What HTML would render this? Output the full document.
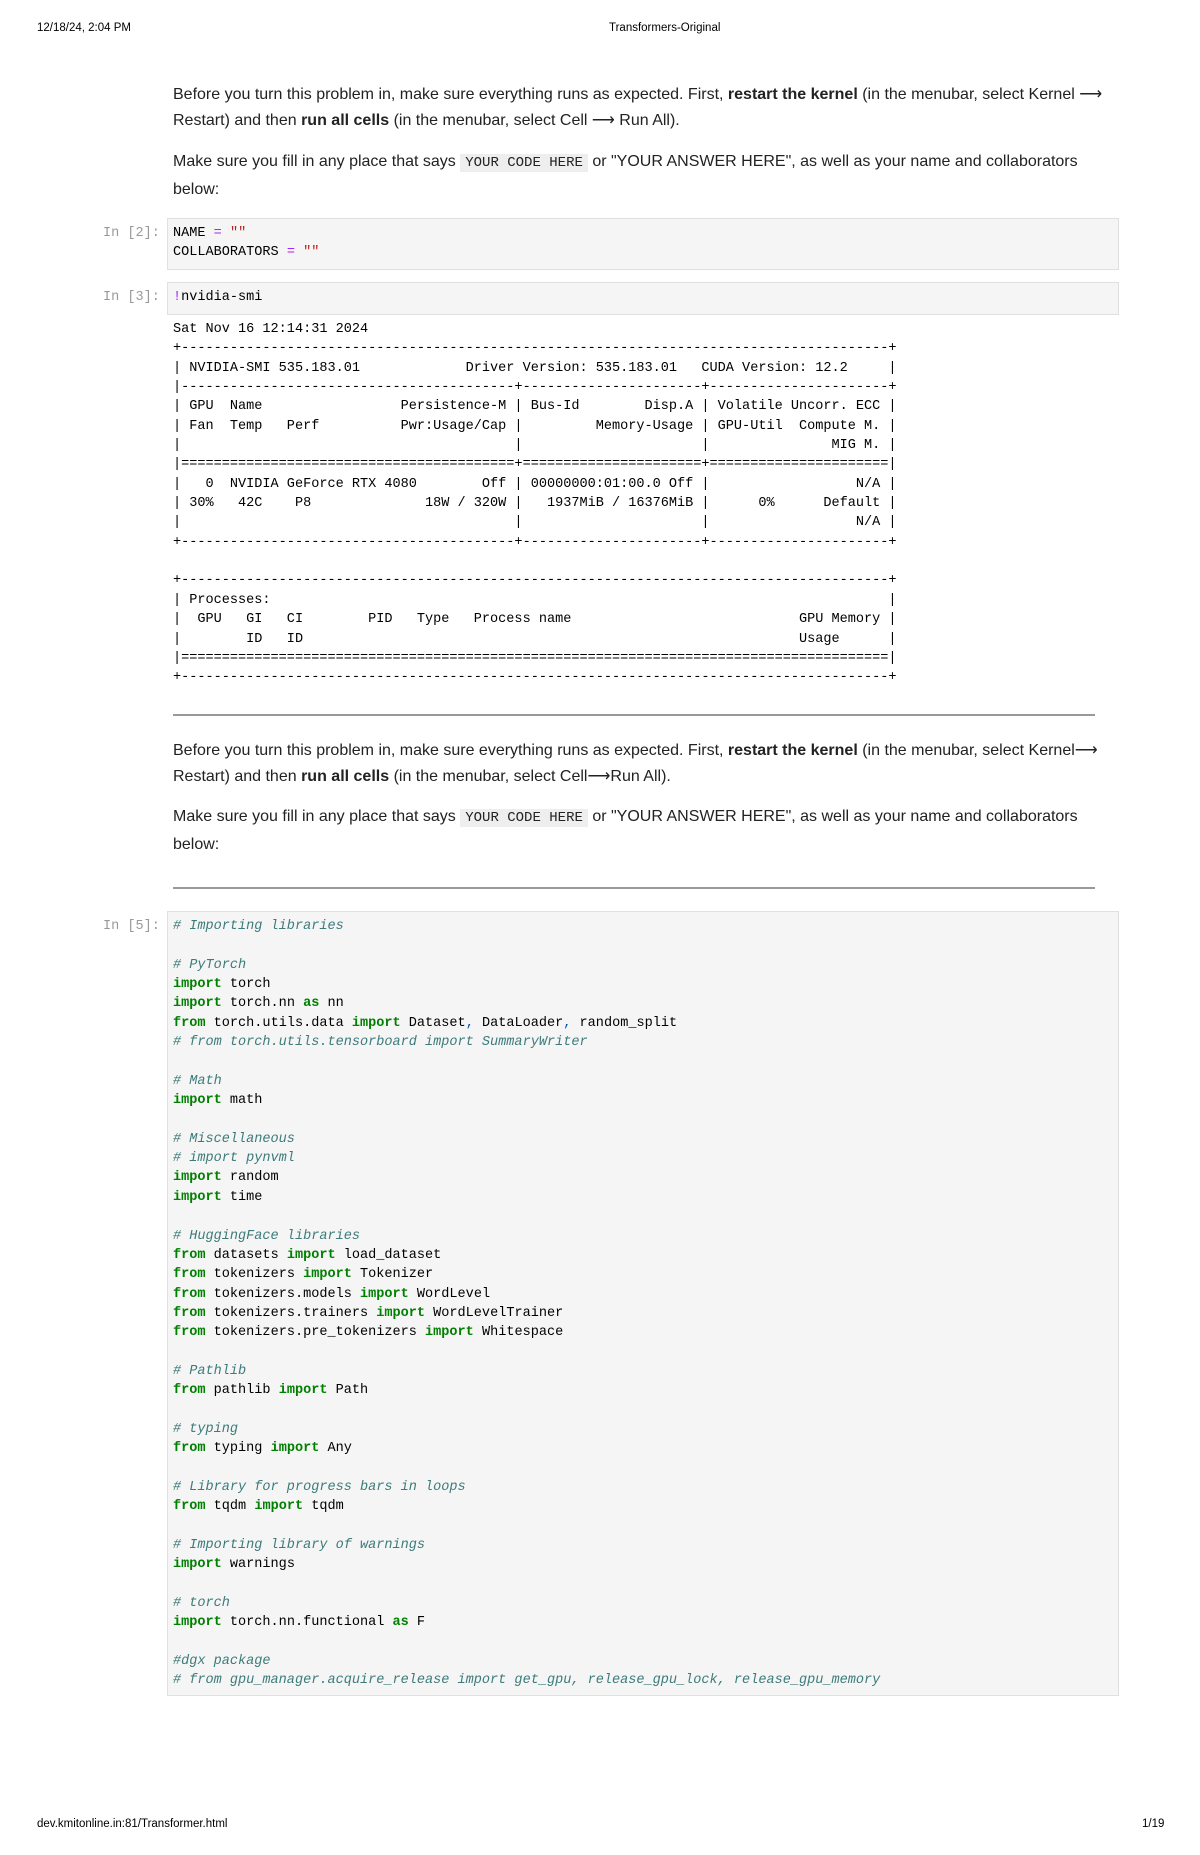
<!DOCTYPE html>
<html><head><meta charset="utf-8"><style>
*{margin:0;padding:0;box-sizing:border-box}
body{width:1200px;height:1855px;position:relative;background:#fff;font-family:"Liberation Sans",sans-serif;color:#000;overflow:hidden}
.hd{position:absolute;top:22px;font-size:11.5px;font-family:"Liberation Sans",sans-serif}
.p{position:absolute;left:173px;width:930px;font-size:16px;line-height:25.5px;color:#222}
.p code{font-family:"Liberation Mono",monospace;font-size:14px;background:#eee;padding:1px 5px}
.box{position:absolute;left:167px;width:952px;background:#f5f5f5;border:1px solid #e0e0e0}
pre{position:absolute;left:173px;font-family:"Liberation Mono",monospace;font-size:13.55px;line-height:19.35px;color:#000;white-space:pre}
.pr{position:absolute;left:103px;font-family:"Liberation Mono",monospace;font-size:13.55px;line-height:19.35px;color:#999}
.k{color:#008000;font-weight:bold}.c{color:#3d7b7b;font-style:italic}.o{color:#aa22ff}.s{color:#ba2121}.pu{color:#0055aa}
.hr{position:absolute;left:173px;width:922px;height:2px;background:#999}
</style></head><body>
<div class="hd" style="left:37px">12/18/24, 2:04 PM</div>
<div class="hd" style="left:609px">Transformers-Original</div>

<div class="p" style="top:82px">Before you turn this problem in, make sure everything runs as expected. First, <b>restart the kernel</b> (in the menubar, select Kernel ⟶<br>Restart) and then <b>run all cells</b> (in the menubar, select Cell ⟶ Run All).</div>
<div class="p" style="top:149px">Make sure you fill in any place that says <code>YOUR CODE HERE</code> or "YOUR ANSWER HERE", as well as your name and collaborators<br>below:</div>

<div class="box" style="top:218px;height:52px"></div>
<div class="pr" style="top:224px">In [2]:</div>
<pre style="top:224px">NAME <span class="o">=</span> <span class="s">""</span>
COLLABORATORS <span class="o">=</span> <span class="s">""</span></pre>

<div class="box" style="top:282px;height:33px"></div>
<div class="pr" style="top:288px">In [3]:</div>
<pre style="top:288px"><span class="o">!</span>nvidia-smi</pre>

<pre style="top:320px">Sat Nov 16 12:14:31 2024       
+---------------------------------------------------------------------------------------+
| NVIDIA-SMI 535.183.01             Driver Version: 535.183.01   CUDA Version: 12.2     |
|-----------------------------------------+----------------------+----------------------+
| GPU  Name                 Persistence-M | Bus-Id        Disp.A | Volatile Uncorr. ECC |
| Fan  Temp   Perf          Pwr:Usage/Cap |         Memory-Usage | GPU-Util  Compute M. |
|                                         |                      |               MIG M. |
|=========================================+======================+======================|
|   0  NVIDIA GeForce RTX 4080        Off | 00000000:01:00.0 Off |                  N/A |
| 30%   42C    P8              18W / 320W |   1937MiB / 16376MiB |      0%      Default |
|                                         |                      |                  N/A |
+-----------------------------------------+----------------------+----------------------+
                                                                                         
+---------------------------------------------------------------------------------------+
| Processes:                                                                            |
|  GPU   GI   CI        PID   Type   Process name                            GPU Memory |
|        ID   ID                                                             Usage      |
|=======================================================================================|
+---------------------------------------------------------------------------------------+</pre>

<div class="hr" style="top:714px"></div>
<div class="p" style="top:738px">Before you turn this problem in, make sure everything runs as expected. First, <b>restart the kernel</b> (in the menubar, select Kernel⟶<br>Restart) and then <b>run all cells</b> (in the menubar, select Cell⟶Run All).</div>
<div class="p" style="top:804px">Make sure you fill in any place that says <code>YOUR CODE HERE</code> or "YOUR ANSWER HERE", as well as your name and collaborators<br>below:</div>
<div class="hr" style="top:887px"></div>

<div class="box" style="top:911px;height:785px"></div>
<div class="pr" style="top:917px">In [5]:</div>
<pre style="top:917px"><span class="c"># Importing libraries</span>

<span class="c"># PyTorch</span>
<span class="k">import</span> torch
<span class="k">import</span> torch.nn <span class="k">as</span> nn
<span class="k">from</span> torch.utils.data <span class="k">import</span> Dataset<span class="pu">,</span> DataLoader<span class="pu">,</span> random_split
<span class="c"># from torch.utils.tensorboard import SummaryWriter</span>

<span class="c"># Math</span>
<span class="k">import</span> math

<span class="c"># Miscellaneous</span>
<span class="c"># import pynvml</span>
<span class="k">import</span> random
<span class="k">import</span> time

<span class="c"># HuggingFace libraries</span>
<span class="k">from</span> datasets <span class="k">import</span> load_dataset
<span class="k">from</span> tokenizers <span class="k">import</span> Tokenizer
<span class="k">from</span> tokenizers.models <span class="k">import</span> WordLevel
<span class="k">from</span> tokenizers.trainers <span class="k">import</span> WordLevelTrainer
<span class="k">from</span> tokenizers.pre_tokenizers <span class="k">import</span> Whitespace

<span class="c"># Pathlib</span>
<span class="k">from</span> pathlib <span class="k">import</span> Path

<span class="c"># typing</span>
<span class="k">from</span> typing <span class="k">import</span> Any

<span class="c"># Library for progress bars in loops</span>
<span class="k">from</span> tqdm <span class="k">import</span> tqdm

<span class="c"># Importing library of warnings</span>
<span class="k">import</span> warnings

<span class="c"># torch</span>
<span class="k">import</span> torch.nn.functional <span class="k">as</span> F

<span class="c">#dgx package</span>
<span class="c"># from gpu_manager.acquire_release import get_gpu, release_gpu_lock, release_gpu_memory</span></pre>

<div class="hd" style="left:37px;top:1818px">dev.kmitonline.in:81/Transformer.html</div>
<div class="hd" style="left:1142px;top:1818px">1/19</div>
</body></html>
